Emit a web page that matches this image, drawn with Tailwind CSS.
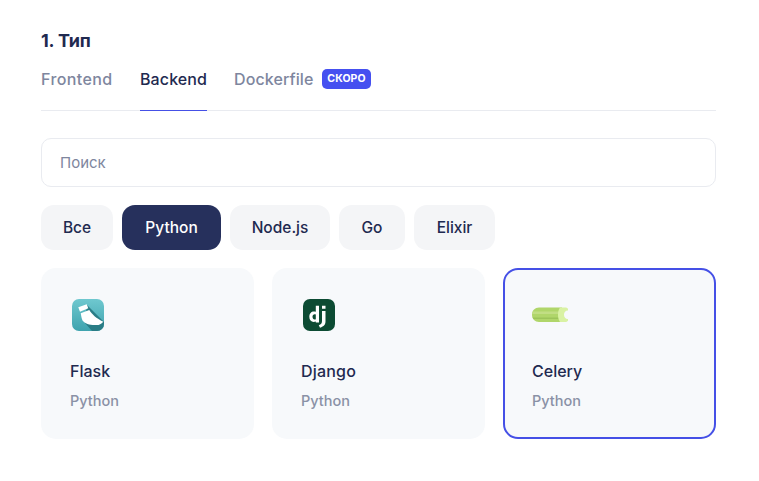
<!DOCTYPE html>
<html lang="en">
<head>
    <meta charset="UTF-8">
    <title>Тип</title>
    <script src="https://cdn.jsdelivr.net/npm/@tailwindcss/browser@4"></script>
</head>
<body class="bg-white font-['Inter',sans-serif] text-[#1f2a50]">
    <div class="w-[759px] h-[481px] pt-[30px] pl-[41px] pr-[43px]">
        <h2 class="text-[18px] leading-[22px] font-bold tracking-[-0.2px]">1. Тип</h2>
        <div class="flex gap-[27px] h-[53px] mt-[6px] border-b border-[#e9ebf0] text-[16px] leading-[22px] font-medium">
            <button class="h-[53px] w-[72px] flex items-start pt-[10px] text-[#7e869e] tracking-[0.4px] whitespace-nowrap">Frontend</button>
            <button class="h-[53px] w-[67px] flex items-start pt-[10px] border-b border-[#4550e6] tracking-[0.1px] whitespace-nowrap">Backend</button>
            <div class="flex items-start gap-[9px] pt-[10px] text-[#7e869e] tracking-[0.1px]">
                <span class="w-[79px] whitespace-nowrap">Dockerfile</span>
                <span class="w-[49px] h-[20px] mt-[1px] rounded-[5px] bg-[#4550f0] text-white text-[10.5px] font-bold leading-[20px] text-center">СКОРО</span>
            </div>
        </div>
        <div class="mt-[27px] h-[49px] border border-[#e9ebf0] rounded-[10px] pl-[18px] pt-[1px] flex items-center text-[15px] text-[#7e869e]">Поиск</div>
        <div class="flex gap-[9px] mt-[18px] text-[15.5px] font-medium">
            <button class="w-[72px] h-[45px] rounded-[13px] bg-[#f4f5f7]">Все</button>
            <button class="w-[99px] h-[45px] rounded-[13px] bg-[#26305c] text-white">Python</button>
            <button class="w-[100px] h-[45px] rounded-[13px] bg-[#f4f5f7]">Node.js</button>
            <button class="w-[66px] h-[45px] rounded-[13px] bg-[#f4f5f7]">Go</button>
            <button class="w-[81px] h-[45px] rounded-[13px] bg-[#f4f5f7]">Elixir</button>
        </div>
        <div class="grid grid-cols-3 gap-[18px] mt-[18px]">
            <div class="h-[171px] rounded-[15px] bg-[#f7f9fb] pt-[29px] pl-[29px]">
                <svg class="w-[36px] h-[36px]" viewBox="0 0 36 36">
                    <defs>
                        <linearGradient id="flaskBg" x1="0" y1="0" x2="0" y2="1"><stop offset="0" stop-color="#6fc8cf"/><stop offset="1" stop-color="#3fa3ae"/></linearGradient>
                        <clipPath id="flaskClip"><rect x="2" y="2" width="32" height="32" rx="7"/></clipPath>
                    </defs>
                    <rect x="2" y="2" width="32" height="32" rx="7" fill="url(#flaskBg)"/>
                    <path d="M17 8L34 25V34H22L15 26Z" fill="#2a7d86" clip-path="url(#flaskClip)"/>
                    <path d="M8.300 10.300L16.700 7.300L18.300 11.300L10 14.700Z" fill="#fff"/>
                    <path d="M10.700 16.300L19.300 13C21.500 17 26.500 21.500 33.300 24.700C31 27.500 28.500 28.300 26 28C20.500 28.300 15 27 12.500 23.500C11.500 21.500 11.200 18.500 10.700 16.300Z" fill="#fff"/>
                </svg>
                <div class="mt-[27px] text-[16px] leading-[22px] font-medium">Flask</div>
                <div class="mt-[9px] text-[14.5px] leading-[20px] font-medium text-[#8a91a6]">Python</div>
            </div>
            <div class="h-[171px] rounded-[15px] bg-[#f7f9fb] pt-[29px] pl-[29px]">
                <svg class="w-[36px] h-[36px]" viewBox="0 0 36 36">
                    <rect x="2" y="2" width="32" height="32" rx="7" fill="#0c4b33"/>
                    <path d="M14.800 8.700H18V25.500H14.800V24.500C11.500 26 8.300 24 8.300 19.800C8.300 15.500 11.500 13.500 14.800 14.800ZM14.800 17.500C13 16.800 11.500 17.800 11.500 19.800C11.500 21.900 13 23 14.800 22.200Z" fill="#fff"/>
                    <path d="M21 8.700H24.500V11.800H21ZM21 14H24.500V24.500C24.500 27.500 23 29.300 19 30.700L17.800 28.200C20 27.200 21 26.500 21 24Z" fill="#fff"/>
                </svg>
                <div class="mt-[27px] text-[16px] leading-[22px] font-medium tracking-[0.2px]">Django</div>
                <div class="mt-[9px] text-[14.5px] leading-[20px] font-medium text-[#8a91a6]">Python</div>
            </div>
            <div class="h-[171px] rounded-[15px] bg-[#f7f9fb] border-2 border-[#4550e6] pt-[27px] pl-[27px]">
                <svg class="w-[36px] h-[36px]" viewBox="0 0 36 36">
                    <path d="M7 10.500H30V25H7C3 25 0 22 0 17.750C0 13.500 3 10.500 7 10.500Z" fill="#b0d66a"/>
                    <path d="M0.800 14.500H29V17H0.100Z" fill="#c1de84"/>
                    <path d="M0.500 20.500H29V22H1.500Z" fill="#9cc45a"/>
                    <path d="M28 10.500H33C35 10.500 36.500 11.500 36.500 13.500C34 13 32 15 32 17.750C32 20.500 34 22.500 36.500 22C36.500 24 35 25 33 25H28C26.500 22.500 26 20.500 26 17.750C26 15 26.500 13 28 10.500Z" fill="#d9f2a3"/>
                </svg>
                <div class="mt-[27px] text-[16px] leading-[22px] font-medium">Celery</div>
                <div class="mt-[9px] text-[14.5px] leading-[20px] font-medium text-[#8a91a6]">Python</div>
            </div>
        </div>
    </div>
</body>
</html>
